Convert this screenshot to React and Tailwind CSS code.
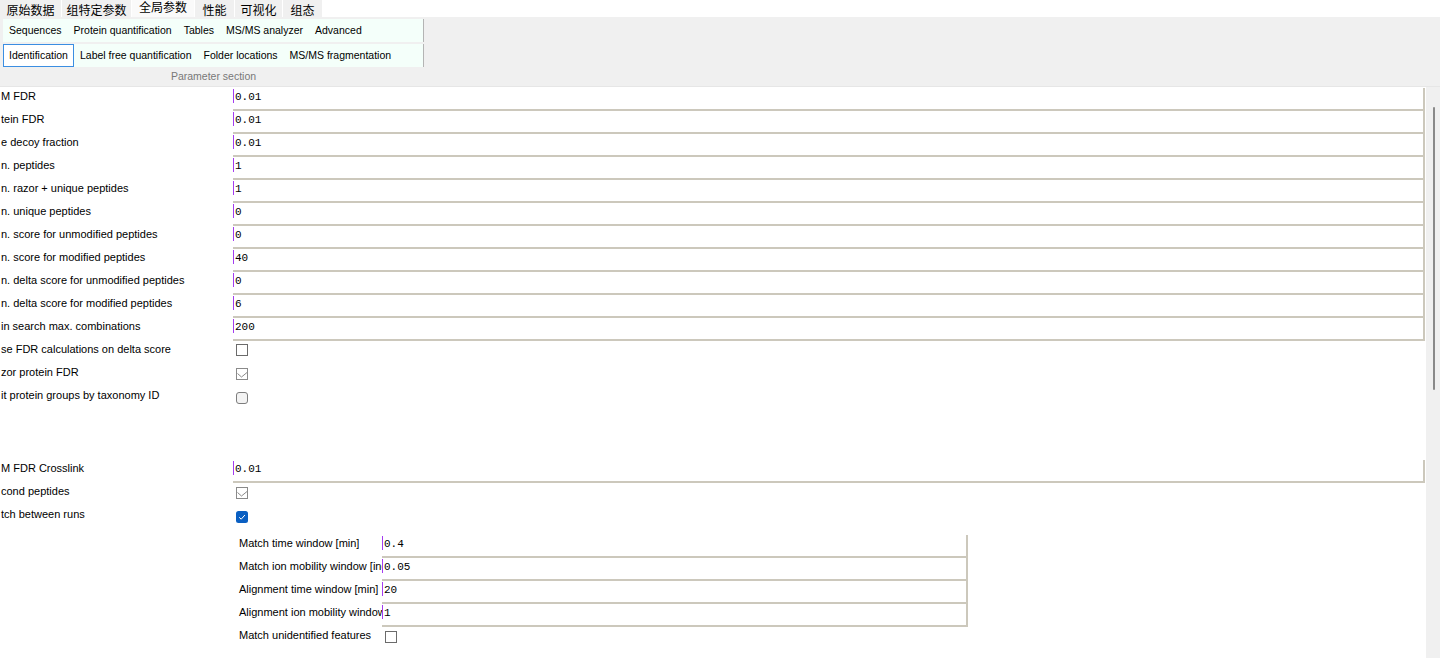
import React from "react";

const topTabs = [
  { name: "原始数据", w: "w-[61px]" },
  { name: "组特定参数", w: "w-[69px]" },
  { name: "全局参数", w: "w-[62px]", active: true },
  { name: "性能", w: "w-[39px]" },
  { name: "可视化", w: "w-[47px]" },
  { name: "组态", w: "w-[39px]" },
];

const sectionRow1 = ["Sequences", "Protein quantification", "Tables", "MS/MS analyzer", "Advanced"];
const sectionRow2 = ["Identification", "Label free quantification", "Folder locations", "MS/MS fragmentation"];

const valueRows = [
  ["M FDR", "0.01"],
  ["tein FDR", "0.01"],
  ["e decoy fraction", "0.01"],
  ["n. peptides", "1"],
  ["n. razor + unique peptides", "1"],
  ["n. unique peptides", "0"],
  ["n. score for unmodified peptides", "0"],
  ["n. score for modified peptides", "40"],
  ["n. delta score for unmodified peptides", "0"],
  ["n. delta score for modified peptides", "6"],
  ["in search max. combinations", "200"],
];

const checkRows = [
  ["se FDR calculations on delta score", "empty"],
  ["zor protein FDR", "gray"],
  ["it protein groups by taxonomy ID", "hover"],
];

const matchRows = [
  ["Match time window [min]", "0.4"],
  ["Match ion mobility window [indices]", "0.05"],
  ["Alignment time window [min]", "20"],
  ["Alignment ion mobility window [indices]", "1"],
];

function CheckBox({ kind }) {
  if (kind === "blue") {
    return (
      <svg width="12" height="12" viewBox="0 0 12 12">
        <rect x="0" y="0" width="12" height="12" rx="2.5" fill="#0a5fc2" />
        <path d="M3.2 6.3 L5.2 8.2 L8.9 4" fill="none" stroke="#ffffff" strokeWidth="1" />
      </svg>
    );
  }
  if (kind === "gray") {
    return (
      <svg width="12" height="12" viewBox="0 0 12 12">
        <rect x="0.5" y="0.5" width="11" height="11" fill="#ffffff" stroke="#8a8a8a" />
        <path d="M1.5 5.5 L5.5 9 L11 4.5" fill="none" stroke="#8a8a8a" strokeWidth="1" />
      </svg>
    );
  }
  if (kind === "hover") {
    return (
      <svg width="12" height="12" viewBox="0 0 12 12">
        <rect x="0.5" y="0.5" width="11" height="11" rx="2.5" fill="#f3f3f3" stroke="#7d7d7d" />
      </svg>
    );
  }
  return (
    <svg width="12" height="12" viewBox="0 0 12 12">
      <rect x="0.5" y="0.5" width="11" height="11" fill="#ffffff" stroke="#6b6b6b" />
    </svg>
  );
}

function ValueBox({ value, className = "flex-1" }) {
  return (
    <div className={`${className} h-[23px] border-b-2 border-r-2 border-[#ccc8bc] flex items-start pt-[1px]`}>
      <span className="w-px h-[14px] bg-[#a43cf0]" />
      <span className="ml-px mt-[2px] font-['Liberation_Mono',monospace] text-[11px] leading-[13px] text-black">
        {value}
      </span>
    </div>
  );
}

function Label({ text, className = "w-[233px]" }) {
  return (
    <div className={`${className} shrink-0 overflow-hidden whitespace-nowrap pl-px pt-[2px] text-[11px] leading-[13px] text-black`}>
      {text}
    </div>
  );
}

function App() {
  return (
    <div className="w-[1440px] h-[658px] overflow-hidden bg-white flex flex-col font-['Liberation_Sans',Arial,sans-serif]">
      {/* top tabs */}
      <div className="h-[17px] flex gap-px bg-white shrink-0">
        {topTabs.map((t) => (
          <div
            key={t.name}
            className={`${t.w} h-[17px] flex justify-center font-['Noto_Sans_CJK_SC',sans-serif] text-[12px] text-black ${
              t.active ? "bg-[#fafafa] items-start leading-[14px]" : "bg-[#f0f0f0] items-end leading-[15px]"
            }`}
          >
            {t.name}
          </div>
        ))}
      </div>

      {/* parameter section */}
      <div className="h-[70px] shrink-0 bg-[#f0f0f0] pt-[2px] pl-[3px] flex flex-col gap-[2px] border-b border-[#e6e6e6]">
        <div className="w-[421px] h-[23px] bg-[#f4fffa] border-r border-[#b4b4b4] flex items-center text-[10.5px] text-black">
          {sectionRow1.map((s) => (
            <div key={s} className="px-[6px] whitespace-nowrap">
              {s}
            </div>
          ))}
        </div>
        <div className="w-[421px] h-[23px] bg-[#f4fffa] border-r border-[#b4b4b4] flex items-center text-[10.5px] text-black">
          {sectionRow2.map((s, i) => (
            <div
              key={s}
              className={`h-[23px] flex items-center whitespace-nowrap ${
                i === 0 ? "px-[5px] bg-white border border-[#3b8ee2]" : "px-[6px]"
              }`}
            >
              {s}
            </div>
          ))}
        </div>
        <div className="w-[421px] flex-1 flex items-center justify-center text-[10.5px] text-[#787878] pb-[1px]">
          Parameter section
        </div>
      </div>

      {/* content */}
      <div className="flex-1 flex min-h-0">
        <div className="w-[1426px] pr-px pt-px flex flex-col overflow-hidden">
          {valueRows.map(([l, v]) => (
            <div key={l} className="flex h-[23px]">
              <Label text={l} />
              <ValueBox value={v} />
            </div>
          ))}
          {checkRows.map(([l, k], i) => (
            <div key={l} className="flex h-[23px]">
              <Label text={l} />
              <div className={`pl-[3px] ${i === 0 ? "pt-[3px]" : i === 1 ? "pt-[4px]" : "pt-[5px]"}`}>
                <CheckBox kind={k} />
              </div>
            </div>
          ))}

          <div className="h-[50px] shrink-0" />

          <div className="flex h-[23px]">
            <Label text="M FDR Crosslink" />
            <ValueBox value="0.01" />
          </div>
          <div className="flex h-[23px]">
            <Label text="cond peptides" />
            <div className="pl-[3px] pt-[4px]">
              <CheckBox kind="gray" />
            </div>
          </div>
          <div className="flex h-[23px]">
            <Label text="tch between runs" />
            <div className="pl-[3px] pt-[5px]">
              <CheckBox kind="blue" />
            </div>
          </div>

          {/* match between runs options */}
          <div className="mt-[6px] pl-[238px] flex flex-col">
            {matchRows.map(([l, v]) => (
              <div key={l} className="flex h-[23px]">
                <Label text={l} className="w-[144px]" />
                <ValueBox value={v} className="w-[586px]" />
              </div>
            ))}
            <div className="flex h-[23px]">
              <Label text="Match unidentified features" className="w-[144px]" />
              <div className="pl-[3px] pt-[4px]">
                <CheckBox kind="empty" />
              </div>
            </div>
          </div>
        </div>

        {/* scrollbar */}
        <div className="w-[14px] bg-[#f0f0f0] flex justify-center pt-[20px]">
          <div className="ml-[2px] w-[2px] h-[283px] rounded-full bg-[#8a8a8a]" />
        </div>
      </div>
    </div>
  );
}

export default App;
